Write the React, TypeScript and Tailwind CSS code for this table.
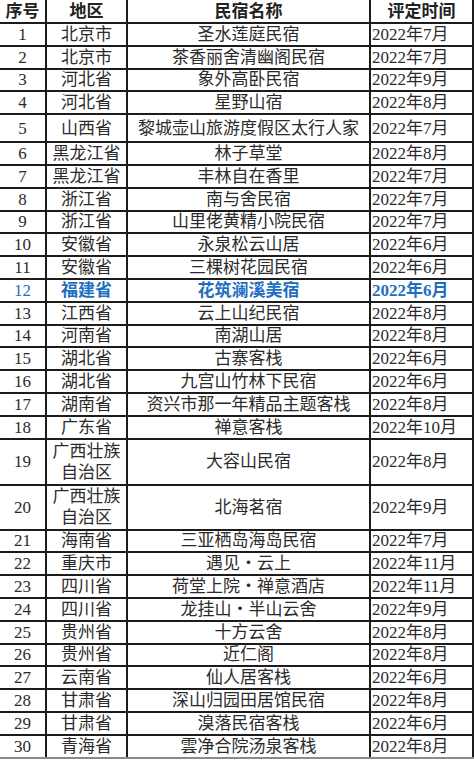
type Row = {
  no: number;
  region: string[];
  name: string;
  date: string;
  h?: string;
  hot?: boolean;
};

const rows: Row[] = [
  { no: 1, region: ["北京市"], name: "圣水莲庭民宿", date: "2022年7月" },
  { no: 2, region: ["北京市"], name: "茶香丽舍清幽阁民宿", date: "2022年7月" },
  { no: 3, region: ["河北省"], name: "象外高卧民宿", date: "2022年9月" },
  { no: 4, region: ["河北省"], name: "星野山宿", date: "2022年8月" },
  { no: 5, region: ["山西省"], name: "黎城壶山旅游度假区太行人家", date: "2022年7月", h: "h-[28px]" },
  { no: 6, region: ["黑龙江省"], name: "林子草堂", date: "2022年8月" },
  { no: 7, region: ["黑龙江省"], name: "丰林自在香里", date: "2022年7月" },
  { no: 8, region: ["浙江省"], name: "南与舍民宿", date: "2022年7月" },
  { no: 9, region: ["浙江省"], name: "山里佬黄精小院民宿", date: "2022年7月" },
  { no: 10, region: ["安徽省"], name: "永泉松云山居", date: "2022年6月" },
  { no: 11, region: ["安徽省"], name: "三棵树花园民宿", date: "2022年6月" },
  { no: 12, region: ["福建省"], name: "花筑澜溪美宿", date: "2022年6月", hot: true },
  { no: 13, region: ["江西省"], name: "云上山纪民宿", date: "2022年8月" },
  { no: 14, region: ["河南省"], name: "南湖山居", date: "2022年8月" },
  { no: 15, region: ["湖北省"], name: "古寨客栈", date: "2022年6月" },
  { no: 16, region: ["湖北省"], name: "九宫山竹林下民宿", date: "2022年6月" },
  { no: 17, region: ["湖南省"], name: "资兴市那一年精品主题客栈", date: "2022年8月" },
  { no: 18, region: ["广东省"], name: "禅意客栈", date: "2022年10月" },
  { no: 19, region: ["广西壮族", "自治区"], name: "大容山民宿", date: "2022年8月", h: "h-[46px]" },
  { no: 20, region: ["广西壮族", "自治区"], name: "北海茗宿", date: "2022年9月", h: "h-[45px]" },
  { no: 21, region: ["海南省"], name: "三亚栖岛海岛民宿", date: "2022年7月" },
  { no: 22, region: ["重庆市"], name: "遇见・云上", date: "2022年11月" },
  { no: 23, region: ["四川省"], name: "荷堂上院・禅意酒店", date: "2022年11月" },
  { no: 24, region: ["四川省"], name: "龙挂山・半山云舍", date: "2022年9月" },
  { no: 25, region: ["贵州省"], name: "十方云舍", date: "2022年8月" },
  { no: 26, region: ["贵州省"], name: "近仁阁", date: "2022年8月" },
  { no: 27, region: ["云南省"], name: "仙人居客栈", date: "2022年6月" },
  { no: 28, region: ["甘肃省"], name: "深山归园田居馆民宿", date: "2022年8月" },
  { no: 29, region: ["甘肃省"], name: "溴落民宿客栈", date: "2022年6月" },
  { no: 30, region: ["青海省"], name: "雲净合院汤泉客栈", date: "2022年8月" },
];

export default function App() {
  return (
    <div className="w-[474px] h-[760px] overflow-hidden bg-white font-['Liberation_Serif','Noto_Sans_CJK_SC',serif] text-[17px] leading-[19px] text-[#2b2b2b]">
      {/* Header */}
      <div className="flex h-[24px] border-b-2 border-[#1c1c1c] font-bold text-[#222]">
        <div className="flex w-[47px] items-center justify-center border-r-2 border-[#1c1c1c]">序号</div>
        <div className="flex w-[81px] items-center justify-center border-r-2 border-[#1c1c1c]">地区</div>
        <div className="flex w-[243px] items-center justify-center border-r-2 border-[#1c1c1c]">民宿名称</div>
        <div className="flex w-[103px] items-center justify-center border-r-2 border-[#1c1c1c]">评定时间</div>
      </div>

      {/* Rows */}
      {rows.map((r) => (
        <div
          key={r.no}
          className={`flex border-b-2 ${r.no === 30 ? "border-[#8a8a8a]" : "border-[#1c1c1c]"} ${r.h ?? "h-[22.8px]"} ${r.hot ? "text-[#1f6fc0]" : ""}`}
        >
          <div className="flex w-[47px] items-center justify-center border-r-2 border-[#1c1c1c]">{r.no}</div>
          <div className={`flex w-[81px] flex-col items-center justify-center border-r-2 border-[#1c1c1c] ${r.hot ? "font-bold" : ""}`}>
            {r.region.map((t) => (
              <span key={t} className={r.region.length > 1 ? "leading-[21px]" : ""}>{t}</span>
            ))}
          </div>
          <div className={`flex w-[243px] items-center justify-center border-r-2 border-[#1c1c1c] whitespace-nowrap ${r.hot ? "font-bold" : ""}`}>
            {r.name}
          </div>
          <div className={`flex w-[103px] items-center pl-[1px] border-r-2 border-[#1c1c1c] whitespace-nowrap ${r.hot ? "font-bold" : ""}`}>
            {r.date}
          </div>
        </div>
      ))}
    </div>
  );
}
